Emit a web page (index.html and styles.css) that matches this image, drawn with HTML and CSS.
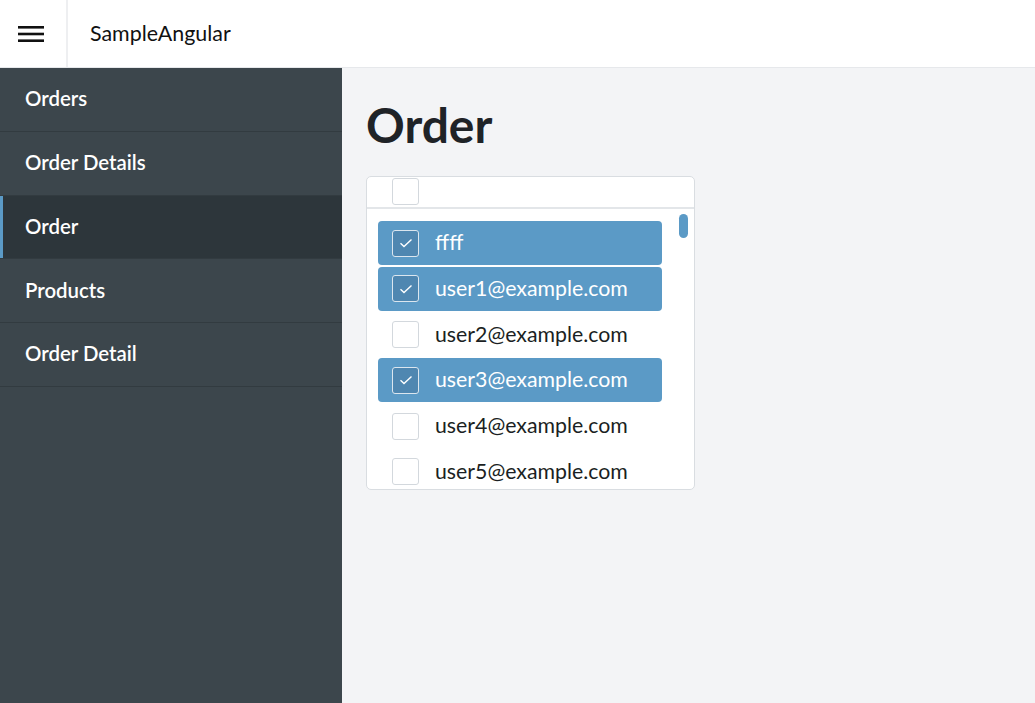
FILE: index.html
```html
<!DOCTYPE html>
<html lang="en">
<head>
<meta charset="utf-8">
<title>SampleAngular</title>
<link rel="stylesheet" href="styles.css">
</head>
<body>
<header class="topbar">
  <button class="menu-btn" aria-label="Menu">
    <svg width="26" height="18" viewBox="0 0 26 18"><rect x="0" y="1" width="26" height="2.6" fill="#111"/><rect x="0" y="7.7" width="26" height="2.6" fill="#111"/><rect x="0" y="14.4" width="26" height="2.6" fill="#111"/></svg>
  </button>
  <div class="brand">SampleAngular</div>
</header>
<div class="layout">
  <nav class="sidebar">
    <a class="nav-item">Orders</a>
    <a class="nav-item">Order Details</a>
    <a class="nav-item active">Order</a>
    <a class="nav-item">Products</a>
    <a class="nav-item">Order Detail</a>
  </nav>
  <main class="content">
    <h1 class="title">Order</h1>
    <div class="listbox">
      <div class="listbox-head"><span class="cb"></span></div>
      <div class="listbox-body">
        <div class="item selected"><span class="cb checked"><svg width="14" height="10" viewBox="0 0 14 10"><path d="M1.5 5.2 L5 8.5 L12.5 1.5" fill="none" stroke="#fff" stroke-width="1.4"/></svg></span><span class="label">ffff</span></div>
        <div class="item selected"><span class="cb checked"><svg width="14" height="10" viewBox="0 0 14 10"><path d="M1.5 5.2 L5 8.5 L12.5 1.5" fill="none" stroke="#fff" stroke-width="1.4"/></svg></span><span class="label">user1@example.com</span></div>
        <div class="item"><span class="cb"></span><span class="label">user2@example.com</span></div>
        <div class="item selected"><span class="cb checked"><svg width="14" height="10" viewBox="0 0 14 10"><path d="M1.5 5.2 L5 8.5 L12.5 1.5" fill="none" stroke="#fff" stroke-width="1.4"/></svg></span><span class="label">user3@example.com</span></div>
        <div class="item"><span class="cb"></span><span class="label">user4@example.com</span></div>
        <div class="item"><span class="cb"></span><span class="label">user5@example.com</span></div>
        <div class="thumb"></div>
      </div>
    </div>
  </main>
</div>
</body>
</html>
```

FILE: styles.css
```css
* { box-sizing: border-box; }
html, body { margin: 0; height: 100%; }
body {
  font-family: Lato, "Noto Sans", "Liberation Sans", sans-serif;
  color: #1b1f23;
  overflow: hidden;
}
.topbar {
  height: 68px;
  display: flex;
  align-items: center;
  background: #fff;
  border-bottom: 1px solid #e6e8eb;
}
.menu-btn {
  width: 68px;
  height: 67px;
  border: 0;
  border-right: 2px solid #eeeff1;
  background: #fff;
  display: flex;
  align-items: center;
  justify-content: center;
  padding: 0 4px 0 0;
}
.brand {
  padding-left: 22px;
  font-size: 21.4px;
  color: #111;
  padding-bottom: 2px;
}
.layout {
  display: flex;
  height: calc(100% - 68px);
}
.sidebar {
  width: 342px;
  background: #3c464c;
  display: flex;
  flex-direction: column;
}
.nav-item {
  height: 63.75px;
  flex: none;
  display: flex;
  align-items: center;
  padding-left: 25px;
  padding-bottom: 2px;
  color: #fff;
  font-size: 20.4px;
  font-weight: 600;
  border-bottom: 1px solid #323b40;
}
.nav-item.active {
  background: #2d363b;
  box-shadow: inset 3px 0 0 #5b9ac6;
}
.content {
  flex: 1;
  background: #f3f4f6;
  padding: 24px 0 0 24px;
}
.title {
  margin: 0 0 18px 0;
  font-size: 48px;
  font-weight: 700;
  line-height: 66px;
  color: #1f2327;
}
.listbox {
  width: 329px;
  height: 314px;
  background: #fff;
  border: 1px solid #d9dde1;
  border-radius: 5px;
  overflow: hidden;
  display: flex;
  flex-direction: column;
}
.listbox-head {
  height: 32px;
  flex: none;
  border-bottom: 2px solid #e3e6e9;
  padding: 1px 0 0 25px;
}
.listbox-body {
  position: relative;
  flex: 1;
  overflow: hidden;
  padding: 12px 0 0 11px;
}
.item {
  width: 284px;
  height: 44px;
  margin-bottom: 1.8px;
  border-radius: 4px;
  display: flex;
  align-items: center;
  padding-left: 14px;
  font-size: 21.3px;
}
.item.selected {
  background: #5b9ac6;
  color: #fff;
}
.cb {
  width: 27px;
  height: 27px;
  flex: none;
  display: inline-flex;
  align-items: center;
  justify-content: center;
  border: 1px solid #d3d8dd;
  border-radius: 3px;
  background: #fff;
}
.cb.checked {
  background: #4f87b1;
  border: 1px solid #dbe6ef;
}
.label {
  margin-left: 16px;
  padding-bottom: 2px;
}
.thumb {
  position: absolute;
  top: 5px;
  right: 6px;
  width: 9px;
  height: 24px;
  border-radius: 5px;
  background: #5b9ac6;
}
```
